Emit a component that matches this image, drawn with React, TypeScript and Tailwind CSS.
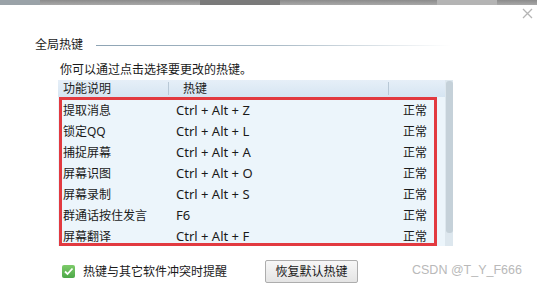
import React from "react";

const rows: [string, string][] = [
  ["提取消息", "Ctrl + Alt + Z"],
  ["锁定QQ", "Ctrl + Alt + L"],
  ["捕捉屏幕", "Ctrl + Alt + A"],
  ["屏幕识图", "Ctrl + Alt + O"],
  ["屏幕录制", "Ctrl + Alt + S"],
  ["群通话按住发言", "F6"],
  ["屏幕翻译", "Ctrl + Alt + F"],
];

export default function App() {
  return (
    <div
      className="relative w-[537px] h-[286px] overflow-hidden bg-white text-[12px] text-[#1a1a1a]"
      style={{ fontFamily: '"Noto Sans", "Noto Sans CJK SC", sans-serif' }}
    >
      {/* background window strip */}
      <div className="h-[5px] bg-gradient-to-b from-[#8c8c8c] to-[#a8a8a8] flex">
        <div className="w-[40px] bg-[#9aa2a8]" />
        <div className="w-[160px]" />
        <div className="w-[80px] bg-[#7a7a7a]" />
        <div className="flex-1" />
        <div className="w-[60px] bg-[#b4b4b4] mr-[40px]" />
      </div>
      {/* close row */}
      <div className="flex justify-end pr-[4px] h-[16px] items-start">
        <svg width="11" height="11" viewBox="0 0 11 11" className="mt-[3px]">
          <path d="M1 1 L10 10 M10 1 L1 10" stroke="#b5b5b5" strokeWidth="1.3" />
        </svg>
      </div>
      {/* title */}
      <div className="flex items-center pl-[35px] mt-[17px] h-[14px]">
        <span className="leading-[14px]">全局热键</span>
        <div className="ml-[13px] w-[355px] h-px bg-gradient-to-r from-[#8ea4b4] via-[#a9bac6] to-transparent" />
      </div>
      {/* description */}
      <div className="pl-[60px] mt-[11px] leading-[14px]">你可以通过点击选择要更改的热键。</div>
      {/* table */}
      <div className="ml-[58px] mt-[3px] w-[395px] h-[166px] flex bg-[#ecf5fb]">
        <div className="flex-1 flex flex-col">
          <div className="h-[17px] flex items-center bg-gradient-to-b from-[#e6eff8] to-[#d6e5f2] text-[#222]">
            <div className="w-[110px] pl-[5px] leading-[17px]">功能说明</div>
            <div className="w-px h-[13px] bg-[#b8c8d6]" />
            <div className="w-[219px] pl-[14px] leading-[17px]">热键</div>
            <div className="w-px h-[13px] bg-[#b8c8d6]" />
          </div>
          <div className="w-[378px] h-[149px] border-[3px] border-[#e23a40] overflow-hidden ml-[1px]">
            {rows.map(([name, key]) => (
              <div key={name} className="h-[21px] flex items-center">
                <div className="w-[114px] pl-[1px] leading-[21px]">{name}</div>
                <div className="flex-1 leading-[21px] text-[13px]">{key}</div>
                <div className="pr-[7px] leading-[21px]">正常</div>
              </div>
            ))}
          </div>
        </div>
        <div className="w-[8px] bg-[#dde7ee] flex justify-center pt-[1px] pb-[13px]">
          <div className="w-[7px] h-full rounded-[3px] bg-[#c5d1d9]" />
        </div>
      </div>
      {/* bottom */}
      <div className="flex items-center mt-[14px] h-[23px]">
        <div className="ml-[62px] w-[13px] h-[13px] rounded-[2px] bg-gradient-to-b from-[#7dcb6a] to-[#4da848] flex items-center justify-center">
          <svg width="11" height="11" viewBox="0 0 11 11">
            <path d="M2 5.5 L4.5 8 L9.5 2.5" stroke="white" strokeWidth="1.8" fill="none" />
          </svg>
        </div>
        <span className="ml-[8px] leading-[14px]">热键与其它软件冲突时提醒</span>
        <button className="ml-[38px] w-[93px] h-[23px] border border-[#adadad] rounded-[2px] bg-gradient-to-b from-[#f7f7f7] to-[#e4e4e4] text-[12px] text-[#1a1a1a] leading-[21px]">
          恢复默认热键
        </button>
      </div>
      <div
        className="absolute left-[412px] top-[262px] text-[12.5px] text-[#b9b9b9] leading-[16px]"
        style={{ fontFamily: '"Liberation Sans", Arial, sans-serif' }}
      >
        CSDN @T_Y_F666
      </div>
    </div>
  );
}
